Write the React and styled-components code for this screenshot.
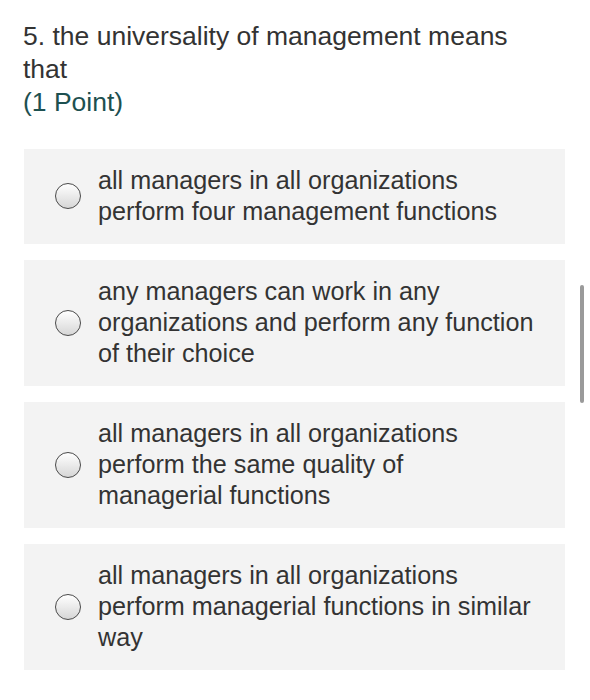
import React from "react";
import styled, { createGlobalStyle } from "styled-components";

const Global = createGlobalStyle`
  html, body { margin: 0; padding: 0; background: #fff; }
  body { font-family: "Liberation Sans", Arial, sans-serif; }
`;

const Page = styled.div`
  position: relative;
  width: 590px;
  height: 700px;
  overflow: hidden;
  box-sizing: border-box;
  padding: 20px 25px 0 23px;
`;

const Question = styled.div`
  font-size: 26.5px;
  line-height: 33px;
  color: #333;
  white-space: nowrap;
`;

const Points = styled.div`
  font-size: 26.5px;
  line-height: 33px;
  color: #1d5050;
`;

const Options = styled.div`
  display: flex;
  flex-direction: column;
  gap: 16px;
  margin-top: 30px;
  margin-left: 1px;
`;

const Option = styled.label`
  display: flex;
  align-items: center;
  background: #f3f3f3;
  padding: 16px 20px 17px 31px;
  cursor: pointer;
`;

const Radio = styled.span`
  flex: none;
  width: 24px;
  height: 24px;
  border-radius: 50%;
  border: 1.5px solid #4a4a4a;
  background: linear-gradient(#ffffff, #d6d6d6);
  margin-right: 17px;
`;

const OptionText = styled.span`
  font-size: 25.2px;
  line-height: 31px;
  color: #333;
  white-space: nowrap;
`;

const Scrollbar = styled.div`
  position: absolute;
  left: 580px;
  top: 285px;
  width: 4px;
  height: 118px;
  border-radius: 2px;
  background: #9a9a9a;
`;

const options = [
  ["all managers in all organizations", "perform four management functions"],
  ["any managers can work in any", "organizations and perform any function", "of their choice"],
  ["all managers in all organizations", "perform the same quality of", "managerial functions"],
  ["all managers in all organizations", "perform managerial functions in similar", "way"],
];

export default function App() {
  return (
    <Page>
      <Global />
      <Question>
        5. the universality of management means
        <br />
        that
      </Question>
      <Points>(1 Point)</Points>
      <Options>
        {options.map((lines, i) => (
          <Option key={i}>
            <Radio />
            <OptionText>
              {lines.map((l, j) => (
                <React.Fragment key={j}>
                  {l}
                  {j < lines.length - 1 && <br />}
                </React.Fragment>
              ))}
            </OptionText>
          </Option>
        ))}
      </Options>
      <Scrollbar />
    </Page>
  );
}
